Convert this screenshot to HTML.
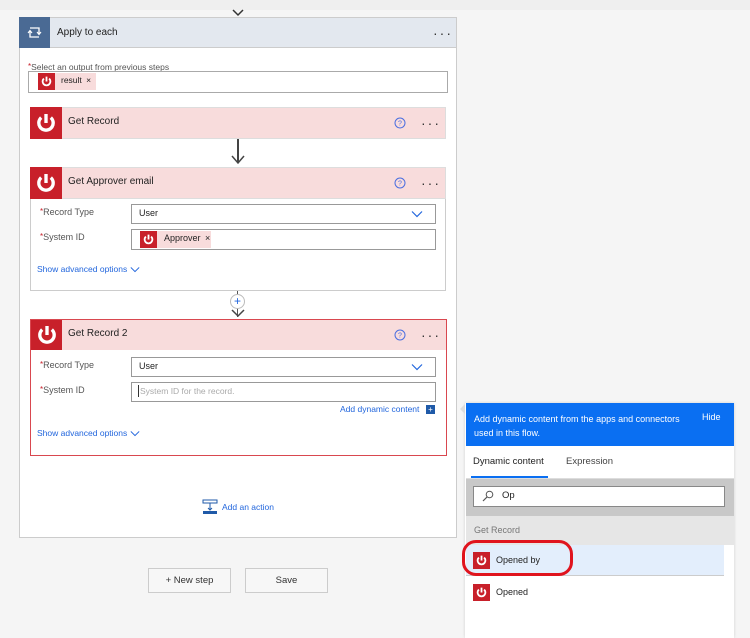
<!DOCTYPE html>
<html><head><meta charset="utf-8"><style>
*{box-sizing:border-box;margin:0;padding:0}
body{width:750px;height:638px;overflow:hidden;background:#f5f5f5;font-family:"Segoe UI","Liberation Sans",sans-serif;font-size:9px;color:#222;position:relative}
.a{position:absolute}
.pw{background:#c8202a;display:flex;align-items:center;justify-content:center}
.hdr{background:#f8dcdc;border:1px solid #ddd}
.lbl{font-size:9px;color:#555}
.lbl b{color:#c8202a;font-weight:normal;font-size:8px;vertical-align:top}
.inp{background:#fff;border:1px solid #999}
.dots{font-size:14px;letter-spacing:2px;color:#333;line-height:8px}
.link{color:#2266dd;font-size:8.5px}
.btn{background:#f7f7f7;border:1px solid #ccc;font-size:9.5px;display:flex;align-items:center;justify-content:center;color:#333}
.t{font-size:10px}
</style></head><body>
<svg width="0" height="0" style="position:absolute"><defs>
<symbol id="pw" viewBox="0 0 20 20"><path d="M6 5.5A6 6 0 1 0 14 5.5" fill="none" stroke="#fff" stroke-width="2.8"/><line x1="10" y1="2.5" x2="10" y2="10" stroke="#fff" stroke-width="2.8"/></symbol>
<symbol id="q" viewBox="0 0 12 12"><circle cx="6" cy="6" r="5" fill="none" stroke="#4a6ee0" stroke-width="1"/><text x="6" y="8.5" font-size="7" text-anchor="middle" fill="#4a6ee0" font-family="Liberation Sans">?</text></symbol>
<symbol id="chev" viewBox="0 0 12 8"><path d="M1 1.5L6 6.5L11 1.5" fill="none" stroke="#2266dd" stroke-width="1.2"/></symbol>
</defs></svg>
<div class="a" style="left:0;top:0;width:750px;height:10px;background:#efefef"></div>
<svg class="a" style="left:232px;top:8px" width="12" height="10"><path d="M1 2L6 7L11 2" fill="none" stroke="#333" stroke-width="1.5"/></svg>

<div class="a" style="left:19px;top:17px;width:438px;height:521px;background:#fff;border:1px solid #ccc"></div>
<div class="a" style="left:19px;top:17px;width:438px;height:31px;background:#e3e8ef;border:1px solid #ccc"></div>
<div class="a" style="left:19px;top:17px;width:31px;height:31px;background:#4a6a94"></div>
<svg class="a" style="left:27px;top:26px" width="15" height="13"><path d="M3 2h9v6M12 11H3V5" fill="none" stroke="#fff" stroke-width="1.3"/><path d="M10 6l2 2.5 2-2.5M1 7l2-2.5 2 2.5" fill="none" stroke="#fff" stroke-width="1.1"/></svg>
<div class="a t" style="left:57px;top:27px">Apply to each</div>
<div class="a dots" style="left:433px;top:29px">···</div>
<div class="a lbl" style="left:28px;top:62px;font-size:8.5px"><b>*</b>Select an output from previous steps</div>
<div class="a inp" style="left:28px;top:71px;width:420px;height:22px;border-color:#aaa"></div>
<div class="a" style="left:38px;top:73px;width:58px;height:17px;background:#f8dcdc"></div>
<div class="a pw" style="left:38px;top:73px;width:17px;height:17px"><svg width="13" height="13"><use href="#pw"/></svg></div>
<div class="a" style="left:61px;top:75px;font-size:8.5px">result <span style="margin-left:2px">×</span></div>

<div class="a hdr" style="left:30px;top:107px;width:416px;height:32px"></div>
<div class="a pw" style="left:30px;top:107px;width:32px;height:32px"><svg width="24" height="24"><use href="#pw"/></svg></div>
<div class="a t" style="left:68px;top:116px">Get Record</div>
<svg class="a" style="left:394px;top:117px" width="12" height="12"><use href="#q"/></svg>
<div class="a dots" style="left:421px;top:119px">···</div>
<div class="a" style="left:237px;top:139px;width:1.5px;height:24px;background:#444"></div>
<svg class="a" style="left:231px;top:155px" width="14" height="10"><path d="M1 1L7 8L13 1" fill="none" stroke="#444" stroke-width="1.5"/></svg>

<div class="a" style="left:30px;top:167px;width:416px;height:124px;background:#fff;border:1px solid #ccc"></div>
<div class="a hdr" style="left:30px;top:167px;width:416px;height:32px"></div>
<div class="a pw" style="left:30px;top:167px;width:32px;height:32px"><svg width="24" height="24"><use href="#pw"/></svg></div>
<div class="a t" style="left:68px;top:176px">Get Approver email</div>
<svg class="a" style="left:394px;top:177px" width="12" height="12"><use href="#q"/></svg>
<div class="a dots" style="left:421px;top:179px">···</div>
<div class="a lbl" style="left:40px;top:207px"><b>*</b>Record Type</div>
<div class="a inp" style="left:131px;top:204px;width:305px;height:20px"></div>
<div class="a" style="left:139px;top:208px;font-size:9px">User</div>
<svg class="a" style="left:411px;top:210px" width="12" height="8"><use href="#chev"/></svg>
<div class="a lbl" style="left:40px;top:232px"><b>*</b>System ID</div>
<div class="a inp" style="left:131px;top:229px;width:305px;height:21px"></div>
<div class="a" style="left:140px;top:231px;width:71px;height:17px;background:#f8dcdc"></div>
<div class="a pw" style="left:140px;top:231px;width:17px;height:17px"><svg width="13" height="13"><use href="#pw"/></svg></div>
<div class="a" style="left:164px;top:233px;font-size:9px">Approver <span style="margin-left:2px">×</span></div>
<div class="a link" style="left:37px;top:264px">Show advanced options</div>
<svg class="a" style="left:130px;top:266px" width="10" height="7"><use href="#chev"/></svg>

<div class="a" style="left:237px;top:291px;width:1px;height:26px;background:#555"></div>
<div class="a" style="left:230px;top:294px;width:15px;height:15px;border-radius:50%;background:#fff;border:1px solid #bbb;color:#2266dd;font-size:12px;line-height:12px;text-align:center">+</div>
<svg class="a" style="left:231px;top:309px" width="14" height="9"><path d="M1 1L7 7L13 1" fill="none" stroke="#444" stroke-width="1.5"/></svg>

<div class="a" style="left:30px;top:319px;width:417px;height:137px;background:#fff;border:1px solid #d9474f"></div>
<div class="a" style="left:31px;top:320px;width:415px;height:30px;background:#f8dcdc"></div>
<div class="a pw" style="left:31px;top:320px;width:31px;height:30px"><svg width="24" height="24"><use href="#pw"/></svg></div>
<div class="a t" style="left:68px;top:328px">Get Record 2</div>
<svg class="a" style="left:394px;top:329px" width="12" height="12"><use href="#q"/></svg>
<div class="a dots" style="left:421px;top:331px">···</div>
<div class="a lbl" style="left:40px;top:360px"><b>*</b>Record Type</div>
<div class="a inp" style="left:131px;top:357px;width:305px;height:20px"></div>
<div class="a" style="left:139px;top:361px;font-size:9px">User</div>
<svg class="a" style="left:411px;top:363px" width="12" height="8"><use href="#chev"/></svg>
<div class="a lbl" style="left:40px;top:385px"><b>*</b>System ID</div>
<div class="a inp" style="left:131px;top:382px;width:305px;height:20px"></div>
<div class="a" style="left:138px;top:385px;width:1px;height:12px;background:#333"></div>
<div class="a" style="left:140px;top:386px;font-size:8.5px;color:#aaa">System ID for the record.</div>
<div class="a link" style="left:340px;top:404px">Add dynamic content</div>
<div class="a" style="left:426px;top:405px;width:9px;height:9px;background:#1f5aa8;color:#fff;font-size:8px;line-height:9px;text-align:center">+</div>
<div class="a link" style="left:37px;top:428px">Show advanced options</div>
<svg class="a" style="left:130px;top:430px" width="10" height="7"><use href="#chev"/></svg>

<svg class="a" style="left:202px;top:499px" width="16" height="16"><rect x="1" y="1" width="14" height="3" fill="none" stroke="#1f5aa8" stroke-width="1"/><line x1="8" y1="4" x2="8" y2="11" stroke="#1f5aa8"/><path d="M6 9l2 2 2-2" fill="none" stroke="#1f5aa8"/><rect x="1" y="12" width="14" height="3" fill="#1f5aa8"/></svg>
<div class="a link" style="left:222px;top:502px">Add an action</div>

<div class="a btn" style="left:148px;top:568px;width:83px;height:25px">+ New step</div>
<div class="a btn" style="left:245px;top:568px;width:83px;height:25px">Save</div>

<div class="a" style="left:465px;top:403px;width:269px;height:235px;background:#fff;box-shadow:0 0 3px rgba(0,0,0,.15)"></div>
<div class="a" style="left:460px;top:404px;width:0;height:0;border-top:5px solid transparent;border-bottom:5px solid transparent;border-right:5px solid #ddd"></div>
<div class="a" style="left:466px;top:403px;width:268px;height:43px;background:#0a6ff2"></div>
<div class="a" style="left:474px;top:412px;width:215px;color:#fff;font-size:9px;line-height:14px">Add dynamic content from the apps and connectors used in this flow.</div>
<div class="a" style="left:702px;top:412px;color:#fff;font-size:9px">Hide</div>
<div class="a" style="left:473px;top:456px;font-size:9.5px;color:#222">Dynamic content</div>
<div class="a" style="left:566px;top:456px;font-size:9.5px;color:#444">Expression</div>
<div class="a" style="left:471px;top:476px;width:77px;height:2px;background:#0a6ff2"></div>
<div class="a" style="left:466px;top:478px;width:268px;height:1px;background:#ddd"></div>
<div class="a" style="left:466px;top:479px;width:268px;height:37px;background:#c8c8c8"></div>
<div class="a" style="left:473px;top:486px;width:252px;height:21px;background:#fff;border:1px solid #888"></div>
<svg class="a" style="left:482px;top:490px" width="12" height="12"><circle cx="7.5" cy="4.5" r="3.3" fill="none" stroke="#555" stroke-width="1"/><line x1="5" y1="7" x2="1" y2="11" stroke="#555" stroke-width="1.2"/></svg>
<div class="a" style="left:502px;top:490px;font-size:9.5px">Op</div>
<div class="a" style="left:466px;top:516px;width:268px;height:29px;background:#e6e6e6"></div>
<div class="a" style="left:474px;top:525px;font-size:9px;color:#777">Get Record</div>
<div class="a" style="left:466px;top:545px;width:258px;height:31px;background:#e3eefc;border-bottom:1px solid #ccc"></div>
<div class="a pw" style="left:473px;top:552px;width:17px;height:17px"><svg width="13" height="13"><use href="#pw"/></svg></div>
<div class="a" style="left:496px;top:555px;font-size:9px">Opened by</div>
<div class="a" style="left:462px;top:540px;width:111px;height:36px;border:3px solid #e0141e;border-radius:14px"></div>
<div class="a pw" style="left:473px;top:584px;width:17px;height:17px"><svg width="13" height="13"><use href="#pw"/></svg></div>
<div class="a" style="left:496px;top:587px;font-size:9px">Opened</div>
</body></html>
